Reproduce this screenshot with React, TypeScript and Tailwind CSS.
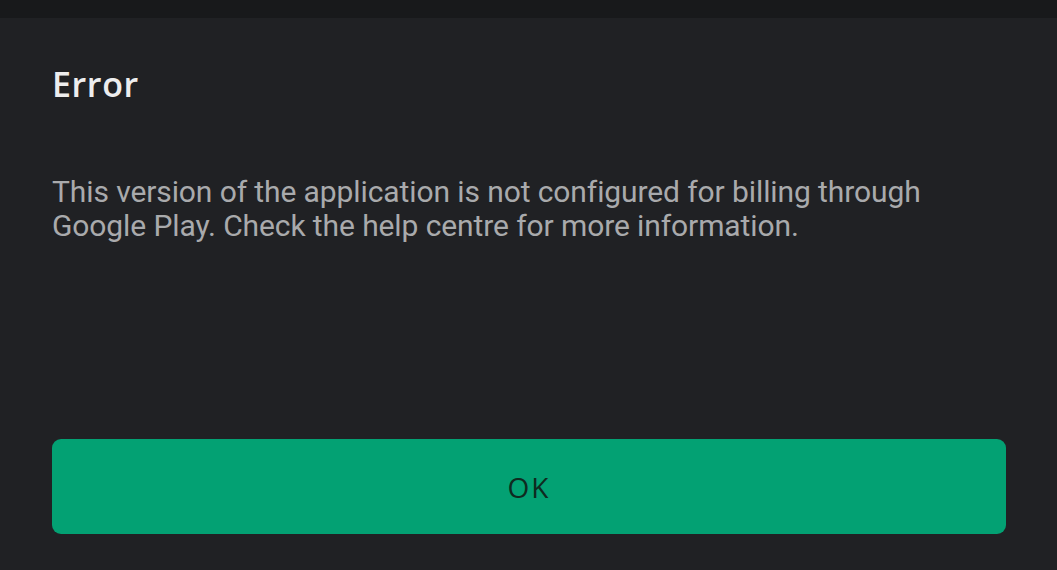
export default function App() {
  return (
    <div className="w-[1057px] h-[570px] bg-[#202124] flex flex-col overflow-hidden">
      <div className="h-[18px] bg-[#18191b] shrink-0" />
      <div className="flex flex-col px-[52px] flex-1">
        <h1
          className="mt-[41px] text-[34px] leading-[50px] font-semibold text-[#ededee] tracking-[0.6px]"
          style={{ fontFamily: "'Open Sans', Inter, sans-serif" }}
        >
          Error
        </h1>
        <p
          className="mt-[66px] text-[30px] leading-[34px] text-[#a9aaac] tracking-[-0.1px]"
          style={{ fontFamily: "Roboto, 'Liberation Sans', sans-serif" }}
        >
          This version of the application is not configured for billing through
          <br />
          Google Play. Check the help centre for more information.
        </p>
        <button
          type="button"
          className="mt-[196px] h-[95px] w-[954px] rounded-[9px] bg-[#03a173] text-[28px] text-[#0f2a20] tracking-[2px]"
          style={{ fontFamily: "'Open Sans', Roboto, sans-serif" }}
        >
          OK
        </button>
      </div>
    </div>
  );
}
